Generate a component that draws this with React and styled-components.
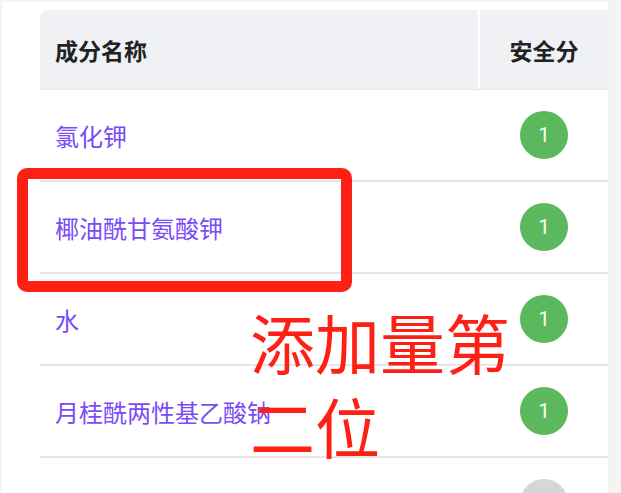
import styled, { createGlobalStyle } from "styled-components";

const GlobalStyle = createGlobalStyle`
  html, body {
    margin: 0;
    padding: 0;
    background: #f4f4f4;
    font-family: "Noto Sans CJK SC", "Noto Sans", sans-serif;
    overflow: hidden;
  }
`;

const ingredients = [
  { name: "氯化钾", score: 1 },
  { name: "椰油酰甘氨酸钾", score: 1 },
  { name: "水", score: 1 },
  { name: "月桂酰两性基乙酸钠", score: 1 },
  { name: "甲基异噻唑啉酮柠檬酸钠", score: null },
];

const App = () => {
  return (
    <>
      <GlobalStyle />
      <StyledPage>
        <StyledTable>
          <StyledHeader>
            <StyledHeadCell>成分名称</StyledHeadCell>
            <StyledHeadCell $center>安全分</StyledHeadCell>
          </StyledHeader>
          {ingredients.map((item) => (
            <StyledRow key={item.name}>
              <StyledName>{item.name}</StyledName>
              <StyledScoreCell>
                <StyledBadge $empty={item.score === null}>
                  {item.score}
                </StyledBadge>
              </StyledScoreCell>
            </StyledRow>
          ))}
        </StyledTable>

        {/* annotation drawn over the screenshot */}
        <StyledMark />
        <StyledNote>添加量第二位</StyledNote>
      </StyledPage>
    </>
  );
};

// Styled Components
const StyledPage = styled.div`
  position: relative;
  width: 606px;
  height: 491px;
  margin: 2px 0 0 2px;
  padding: 8px 0 0 38px;
  box-sizing: border-box;
  background: #ffffff;
  overflow: hidden;
`;

const StyledTable = styled.div`
  width: 568px;
  display: flex;
  flex-direction: column;
`;

const StyledHeader = styled.div`
  display: grid;
  grid-template-columns: 438px 128px;
  column-gap: 2px;
  height: 79px;
  border-bottom: 1px solid #e6e6e6;
`;

const StyledHeadCell = styled.div`
  display: flex;
  align-items: center;
  justify-content: ${(p) => (p.$center ? "center" : "flex-start")};
  padding-left: ${(p) => (p.$center ? "0" : "15px")};
  background: #f0f1f5;
  border-top-left-radius: ${(p) => (p.$center ? "0" : "8px")};
  color: #222222;
  font-size: 23px;
  font-weight: 700;
`;

const StyledRow = styled.div`
  display: grid;
  grid-template-columns: 440px 128px;
  height: 90px;
  border-bottom: 2px solid #e6e6e6;
  flex-shrink: 0;
`;

const StyledName = styled.div`
  display: flex;
  align-items: center;
  padding-left: 15px;
  color: #7a4cf6;
  font-size: 24px;
  white-space: nowrap;
`;

const StyledScoreCell = styled.div`
  display: flex;
  align-items: center;
  justify-content: center;
`;

const StyledBadge = styled.div`
  width: 48px;
  height: 48px;
  border-radius: 50%;
  display: flex;
  align-items: center;
  justify-content: center;
  background: ${(p) => (p.$empty ? "#d6d6d6" : "#5cb85c")};
  color: #ffffff;
  font-family: Roboto, "Liberation Sans", sans-serif;
  font-size: 20px;
`;

const StyledMark = styled.div`
  position: absolute;
  left: 15px;
  top: 166px;
  width: 335px;
  height: 124px;
  box-sizing: border-box;
  border: 11px solid #ff2015;
  border-radius: 10px;
`;

const StyledNote = styled.div`
  position: absolute;
  left: 248px;
  top: 297px;
  width: 270px;
  color: #ff2015;
  font-size: 65px;
  line-height: 84px;
`;

export default App;
